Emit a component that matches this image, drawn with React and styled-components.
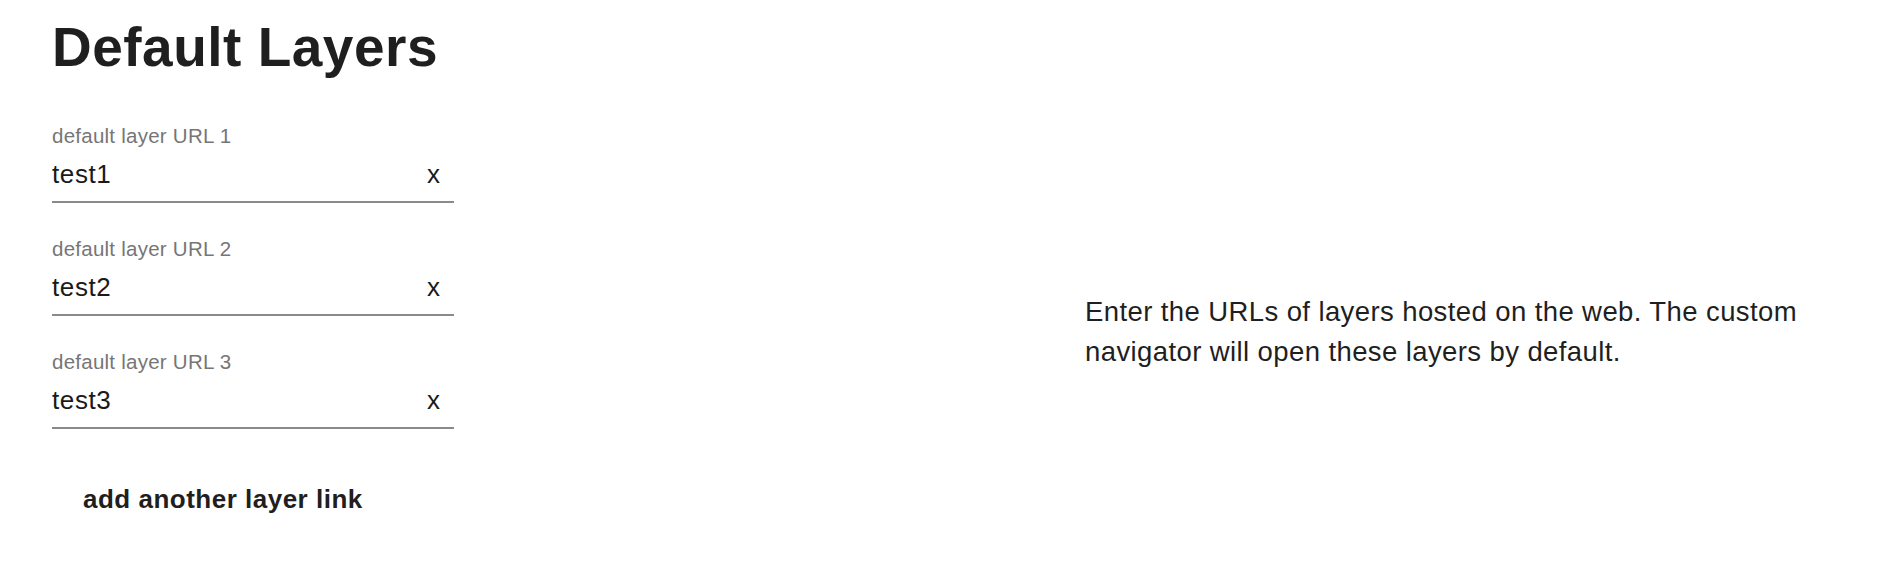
import React, { useState } from "react";
import styled, { createGlobalStyle } from "styled-components";

const GlobalStyle = createGlobalStyle`
  html, body {
    margin: 0;
    padding: 0;
    background: #ffffff;
  }
  body {
    font-family: "Liberation Sans", Arial, Helvetica, sans-serif;
    color: #1f1f1f;
  }
  * { box-sizing: border-box; }
`;

const Page = styled.div`
  padding: 17px 0 0 52px;
`;

const Title = styled.h1`
  margin: 0 0 46px 0;
  font-size: 55px;
  line-height: 61px;
  font-weight: 700;
  color: #1f1f1f;
  letter-spacing: 0.5px;
`;

const Layout = styled.div`
  display: grid;
  grid-template-columns: 1033px 1fr;
  align-items: center;
`;

const Form = styled.div`
  display: flex;
  flex-direction: column;
  align-items: flex-start;
  padding-bottom: 13px;
`;

const Fields = styled.div`
  display: flex;
  flex-direction: column;
  gap: 34px;
`;

const Field = styled.div`
  width: 402px;
  display: flex;
  flex-direction: column;
  gap: 10px;
`;

const Label = styled.label`
  font-size: 20.5px;
  line-height: 24px;
  color: #767676;
  letter-spacing: 0.25px;
`;

const InputRow = styled.div`
  display: flex;
  align-items: center;
  padding: 0 14px 11px 0;
  border-bottom: 2px solid #8a8a8a;
`;

const TextInput = styled.input`
  flex: 1;
  min-width: 0;
  height: 32px;
  padding: 0;
  border: none;
  outline: none;
  background: transparent;
  font-family: "Liberation Sans", Arial, Helvetica, sans-serif;
  font-size: 26px;
  letter-spacing: 0.6px;
  color: #1a1a1a;
`;

const RemoveButton = styled.button`
  border: none;
  background: transparent;
  padding: 0;
  height: 32px;
  font-family: "Liberation Sans", Arial, Helvetica, sans-serif;
  font-size: 26px;
  line-height: 32px;
  color: #1a1a1a;
  cursor: pointer;
`;

const AddButton = styled.button`
  margin-top: 43px;
  border: none;
  background: transparent;
  padding: 12px 31px;
  font-family: "Liberation Sans", Arial, Helvetica, sans-serif;
  font-size: 26px;
  line-height: 30px;
  font-weight: 700;
  letter-spacing: 0.5px;
  color: #1f1f1f;
  cursor: pointer;
`;

const Description = styled.p`
  margin: 0;
  max-width: 760px;
  font-size: 27.5px;
  line-height: 40px;
  letter-spacing: 0.4px;
  color: #1f1f1f;
`;

export default function App() {
  const [layers, setLayers] = useState(["test1", "test2", "test3"]);

  const update = (i, v) =>
    setLayers((prev) => prev.map((x, j) => (j === i ? v : x)));
  const remove = (i) => setLayers((prev) => prev.filter((_, j) => j !== i));
  const add = () => setLayers((prev) => [...prev, ""]);

  return (
    <>
      <GlobalStyle />
      <Page>
        <Title>Default Layers</Title>
        <Layout>
          <Form>
            <Fields>
              {layers.map((value, i) => (
                <Field key={i}>
                  <Label htmlFor={`layer-${i}`}>default layer URL {i + 1}</Label>
                  <InputRow>
                    <TextInput
                      id={`layer-${i}`}
                      value={value}
                      onChange={(e) => update(i, e.target.value)}
                    />
                    <RemoveButton onClick={() => remove(i)}>x</RemoveButton>
                  </InputRow>
                </Field>
              ))}
            </Fields>
            <AddButton onClick={add}>add another layer link</AddButton>
          </Form>
          <Description>
            Enter the URLs of layers hosted on the web. The custom navigator
            will open these layers by default.
          </Description>
        </Layout>
      </Page>
    </>
  );
}
